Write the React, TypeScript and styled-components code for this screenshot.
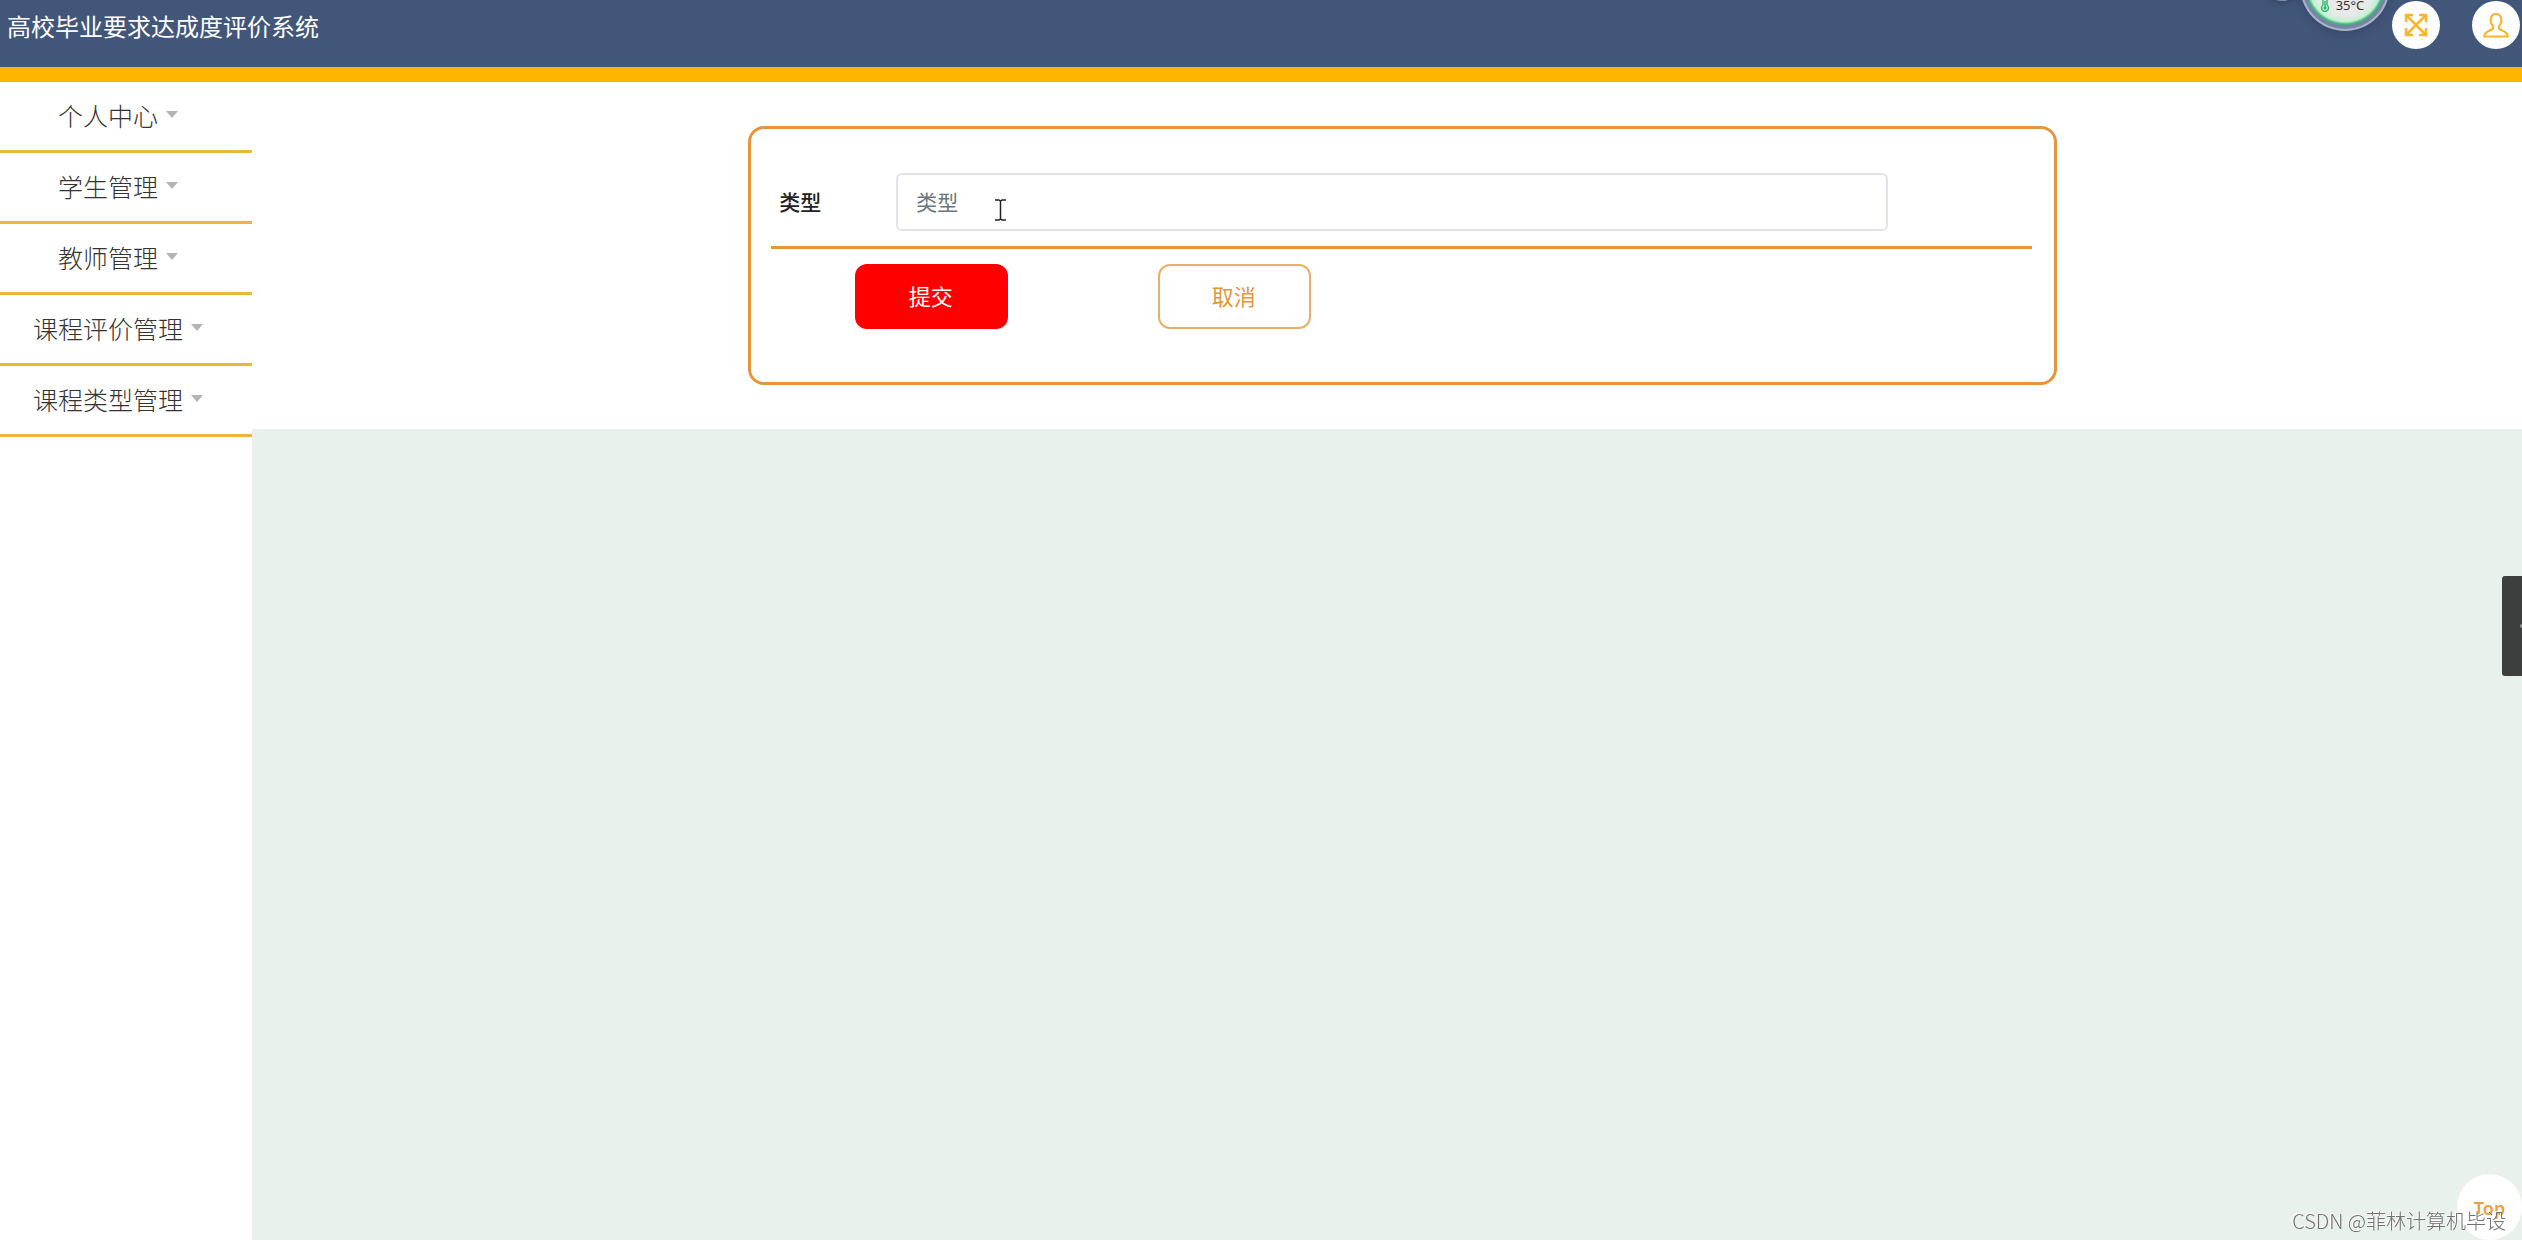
import React from 'react';
import styled, { createGlobalStyle, css } from 'styled-components';

const GlobalStyle = createGlobalStyle`
  *, *::before, *::after { box-sizing: border-box; }
  body {
    margin: 0;
    background: #e8f1ec;
    font-family: 'Noto Sans CJK SC', 'Liberation Sans', sans-serif;
  }
  button, input { font-family: inherit; }
`;

const Page = styled.div`
  display: flex;
  flex-direction: column;
  min-height: 100vh;
  overflow: hidden;
`;

const Header = styled.header`
  display: flex;
  justify-content: space-between;
  align-items: flex-start;
  height: 82px;
  padding: 0 2px 0 7px;
  background: #42567a;
  border-bottom: 15px solid #ffb400;
`;

const Title = styled.h1`
  margin: 0;
  padding-top: 8px;
  font-size: 24px;
  font-weight: 400;
  line-height: 36px;
  color: #fff;
`;

const HeaderActions = styled.div`
  display: flex;
  gap: 32px;
  padding-top: 1px;
`;

const RoundButton = styled.button`
  display: flex;
  align-items: center;
  justify-content: center;
  width: 48px;
  height: 48px;
  padding: 0;
  border: 0;
  border-radius: 50%;
  background: #fff;
  color: #fdb62c;
`;

const Weather = styled.div`
  position: absolute;
  top: -60px;
  right: 132px;
  display: flex;
  align-items: flex-end;
  justify-content: center;
  gap: 6px;
  width: 90px;
  height: 91px;
  padding: 0 6px 17px 0;
  border: 2px solid #a9b3c8;
  border-radius: 50%;
  background: radial-gradient(circle closest-side, #e8eaea 0 68%, #c4f0d4 84%, #3dba74 90%, #7486a3 94%);
  box-shadow: 0 2px 10px rgba(30, 40, 70, 0.35);
  font-family: 'Noto Sans', sans-serif;
  font-size: 13px;
  line-height: 14px;
  color: #333;
`;

const WeatherShadow = styled.span`
  position: absolute;
  top: -40px;
  right: 219px;
  width: 42px;
  height: 41px;
  border-radius: 50%;
  background: #8391aa;
  box-shadow: 0 1px 6px rgba(30, 40, 70, 0.5);
`;

const Body = styled.div`
  display: flex;
  flex: 1;
`;

const Sidebar = styled.nav`
  flex: 0 0 10%;
  background: #fff;
`;

const MenuButton = styled.button`
  display: flex;
  align-items: center;
  justify-content: center;
  gap: 8px;
  width: 100%;
  height: 71px;
  padding: 0 16px 3px 0;
  border: 0;
  border-bottom: 3px solid #eab63c;
  background: #fff;
  font-size: 25px;
  font-weight: 300;
  line-height: 36px;
  color: #333;
`;

const Caret = styled.span`
  border: 6px solid transparent;
  border-top: 7px solid #b4b4b4;
  border-bottom: 0;
`;

const Main = styled.main`
  flex: 1;
`;

const Panel = styled.section`
  padding: 44px 465px 44px 496px;
  background: #fff;
`;

const Card = styled.form`
  padding: 44px 22px 53px 20px;
  border: 3px solid #e5963a;
  border-radius: 16px;
`;

const Field = styled.div`
  display: flex;
  align-items: center;
  padding: 0 144px 15px 8px;
  border-bottom: 3px solid #e5963a;
`;

const Label = styled.label`
  flex: 0 0 117px;
  padding-bottom: 2px;
  font-size: 21px;
  font-weight: 500;
  color: #222;
`;

const TextInput = styled.input`
  flex: 1;
  min-width: 0;
  height: 58px;
  padding: 0 18px 2px;
  border: 2px solid #e2e3e8;
  border-radius: 6px;
  background: #fff;
  font-size: 21px;
  color: #495057;
  &::placeholder { color: #6c757d; opacity: 1; }
`;

const Actions = styled.div`
  display: flex;
  gap: 150px;
  padding: 15px 0 0 84px;
`;

const ActionButton = styled.button<{ $primary?: boolean }>`
  width: 153px;
  height: 65px;
  padding: 0 2px 4px 0;
  border-radius: 12px;
  font-size: 22px;
  ${({ $primary }) => $primary
    ? css`
        border: 0;
        background: #ff0000;
        color: #fff;
      `
    : css`
        border: 2px solid #e9ae68;
        background: #fff;
        color: #e5963a;
      `}
`;

const TextCursor = styled.svg`
  position: absolute;
  top: 199px;
  left: 995px;
`;

const SideHandle = styled.button`
  position: fixed;
  top: 576px;
  right: 0;
  width: 20px;
  height: 100px;
  padding: 0;
  border: 0;
  border-radius: 3px 0 0 3px;
  background: #3d3f3e;
  overflow: hidden;
`;

const HandleDot = styled.span`
  position: absolute;
  top: 48px;
  right: -2px;
  width: 4px;
  height: 4px;
  border-radius: 50%;
  background: #999;
`;

const TopLink = styled.a`
  position: fixed;
  right: 0;
  bottom: 0;
  display: flex;
  align-items: center;
  justify-content: center;
  width: 65px;
  height: 66px;
  padding-top: 2px;
  border-radius: 50%;
  background: #fff;
  font-family: 'Noto Sans', sans-serif;
  font-size: 18px;
  font-weight: 600;
  color: #eda142;
  text-decoration: none;
`;

const Watermark = styled.div`
  position: fixed;
  right: 16px;
  bottom: 4px;
  font-size: 20px;
  font-weight: 300;
  line-height: 30px;
  color: #707070;
  text-shadow: -1px -1px 0 #fff;
  white-space: nowrap;
  pointer-events: none;
`;

const menu = ['个人中心', '学生管理', '教师管理', '课程评价管理', '课程类型管理'];

export default function App() {
  return (
    <Page id="top">
      <GlobalStyle />
      <Header>
        <Title>高校毕业要求达成度评价系统</Title>
        <HeaderActions>
          <RoundButton aria-label="全屏">
            <svg width="24" height="24" viewBox="0 0 24 24" fill="none" stroke="currentColor" strokeWidth="2.500">
              <path d="M2 2 22 22M22 2 2 22M2 9V2H9M15 2H22V9M22 15V22H15M9 22H2V15" />
            </svg>
          </RoundButton>
          <RoundButton aria-label="用户">
            <svg width="26" height="26" viewBox="0 0 26 26" fill="none" stroke="currentColor" strokeWidth="2.200" strokeLinejoin="round">
              <path d="M10 16.500V14C6.500 11 6.500 2 13 2s6.500 9 3 12v2.500C18 19 24.500 19 24.800 24.500H1.200C1.500 19 8 19 10 16.500Z" />
            </svg>
          </RoundButton>
        </HeaderActions>
      </Header>
      <WeatherShadow />
      <Weather>
        <svg width="10" height="14" viewBox="0 0 10 14" fill="none" stroke="#2fbf71" strokeWidth="1.500">
          <path d="M3 7V0H7V7A3.500 3.500 0 1 1 3 7ZM5 3V10" />
          <circle cx="5" cy="10" r="1" fill="#2fbf71" />
        </svg>
        <span>35°C</span>
      </Weather>
      <Body>
        <Sidebar>
          {menu.map((name) => (
            <MenuButton key={name}>
              {name}
              <Caret />
            </MenuButton>
          ))}
        </Sidebar>
        <Main>
          <Panel>
            <Card onSubmit={(e) => e.preventDefault()}>
              <Field>
                <Label htmlFor="type">类型</Label>
                <TextInput id="type" placeholder="类型" />
              </Field>
              <Actions>
                <ActionButton $primary type="submit">提交</ActionButton>
                <ActionButton type="button">取消</ActionButton>
              </Actions>
            </Card>
          </Panel>
        </Main>
      </Body>
      <TextCursor width="11" height="22" viewBox="0 0 11 22" fill="none" stroke="#222" strokeWidth="1.500">
        <path d="M0 1H4L5.500 2 7 1H11M5.500 2V20M0 21H4L5.500 20 7 21H11" />
      </TextCursor>
      <SideHandle aria-label="展开">
        <HandleDot />
      </SideHandle>
      <TopLink href="#top">Top</TopLink>
      <Watermark>CSDN @菲林计算机毕设</Watermark>
    </Page>
  );
}
